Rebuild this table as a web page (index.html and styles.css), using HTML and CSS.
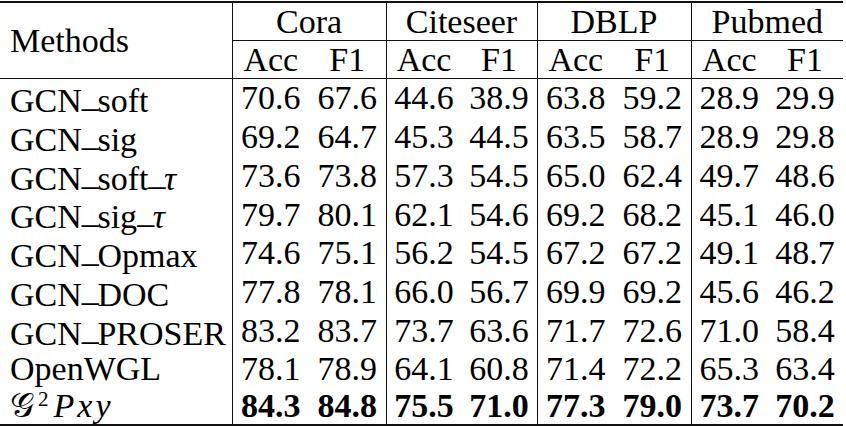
FILE: index.html
```html
<!DOCTYPE html>
<html>
<head>
    <meta name="viewport" content="width=device-width, initial-scale=1.0">
    <title>Results</title>
    <link rel="stylesheet" href="styles.css">
</head>
<body>
    <!-- Results table -->
    <table class="results">
        <colgroup>
            <col class="c-method">
            <col class="c-num"><col class="c-num">
            <col class="c-num-n"><col class="c-num-n">
            <col class="c-num"><col class="c-num">
            <col class="c-num-m"><col class="c-num-m">
        </colgroup>
        <thead>
            <tr class="head-top">
                <th rowspan="2" class="method">Methods</th>
                <th colspan="2" class="g">Cora</th>
                <th colspan="2" class="g">Citeseer</th>
                <th colspan="2" class="g">DBLP</th>
                <th colspan="2" class="g">Pubmed</th>
            </tr>
            <tr class="head-sub">
                <th class="g">Acc</th><th>F1</th>
                <th class="g">Acc</th><th>F1</th>
                <th class="g">Acc</th><th>F1</th>
                <th class="g">Acc</th><th>F1</th>
            </tr>
        </thead>
        <tbody>
            <tr>
                <td class="method">GCN<span class="us">_</span>soft</td>
                <td class="g">70.6</td><td>67.6</td>
                <td class="g">44.6</td><td>38.9</td>
                <td class="g">63.8</td><td>59.2</td>
                <td class="g">28.9</td><td>29.9</td>
            </tr>
            <tr>
                <td class="method">GCN<span class="us">_</span>sig</td>
                <td class="g">69.2</td><td>64.7</td>
                <td class="g">45.3</td><td>44.5</td>
                <td class="g">63.5</td><td>58.7</td>
                <td class="g">28.9</td><td>29.8</td>
            </tr>
            <tr>
                <td class="method">GCN<span class="us">_</span>soft<span class="us">_</span><i class="math">τ</i></td>
                <td class="g">73.6</td><td>73.8</td>
                <td class="g">57.3</td><td>54.5</td>
                <td class="g">65.0</td><td>62.4</td>
                <td class="g">49.7</td><td>48.6</td>
            </tr>
            <tr>
                <td class="method">GCN<span class="us">_</span>sig<span class="us">_</span><i class="math">τ</i></td>
                <td class="g">79.7</td><td>80.1</td>
                <td class="g">62.1</td><td>54.6</td>
                <td class="g">69.2</td><td>68.2</td>
                <td class="g">45.1</td><td>46.0</td>
            </tr>
            <tr>
                <td class="method">GCN<span class="us">_</span>Opmax</td>
                <td class="g">74.6</td><td>75.1</td>
                <td class="g">56.2</td><td>54.5</td>
                <td class="g">67.2</td><td>67.2</td>
                <td class="g">49.1</td><td>48.7</td>
            </tr>
            <tr>
                <td class="method">GCN<span class="us">_</span>DOC</td>
                <td class="g">77.8</td><td>78.1</td>
                <td class="g">66.0</td><td>56.7</td>
                <td class="g">69.9</td><td>69.2</td>
                <td class="g">45.6</td><td>46.2</td>
            </tr>
            <tr>
                <td class="method">GCN<span class="us">_</span>PROSER</td>
                <td class="g">83.2</td><td>83.7</td>
                <td class="g">73.7</td><td>63.6</td>
                <td class="g">71.7</td><td>72.6</td>
                <td class="g">71.0</td><td>58.4</td>
            </tr>
            <tr>
                <td class="method">OpenWGL</td>
                <td class="g">78.1</td><td>78.9</td>
                <td class="g">64.1</td><td>60.8</td>
                <td class="g">71.4</td><td>72.2</td>
                <td class="g">65.3</td><td>63.4</td>
            </tr>
            <tr class="best">
                <td class="method"><i class="math cal">𝒢</i><sup>2</sup><i class="math pxy">Pxy</i></td>
                <td class="g">84.3</td><td>84.8</td>
                <td class="g">75.5</td><td>71.0</td>
                <td class="g">77.3</td><td>79.0</td>
                <td class="g">73.7</td><td>70.2</td>
            </tr>
        </tbody>
    </table>
</body>
</html>
```

FILE: styles.css
```css
body {
    margin: 0;
    background-color: #fff;
    color: #000;
    font-family: "Liberation Serif", "Times New Roman", serif;
}

.results {
    border-collapse: collapse;
    table-layout: fixed;
    width: 843px;
    margin-top: 1px;
    font-size: 34px;
    border-top: 2px solid #111;
    border-bottom: 2px solid #111;
}

.c-method { width: 232px; }
.c-num { width: 77px; }
.c-num-n { width: 75.5px; }
.c-num-m { width: 76px; }

th, td {
    height: 37px;
    padding: 0;
    font-weight: normal;
    text-align: center;
    line-height: 1;
    white-space: nowrap;
}

.method {
    text-align: left;
    padding-left: 10px;
    border-right: 1px solid #111;
}

.g {
    border-left: 1px solid #111;
}

.head-top .g {
    border-bottom: 1px solid #111;
}

.head-sub th {
    border-bottom: 1px solid #111;
}

thead .method {
    border-bottom: 1px solid #111;
}

/* LaTeX style \_ sits on the baseline */
.us {
    vertical-align: 0.14em;
    letter-spacing: -0.04em;
}

.math {
    font-style: italic;
}

.cal {
    font-family: "DejaVu Serif", serif;
    font-style: normal;
}

sup {
    font-size: 0.62em;
    line-height: 0;
    margin-left: 4px;
    vertical-align: 0.55em;
}

.pxy {
    margin-left: 5px;
    letter-spacing: 3px;
}

.best td {
    font-weight: bold;
}

.best .method {
    font-weight: normal;
}
```
